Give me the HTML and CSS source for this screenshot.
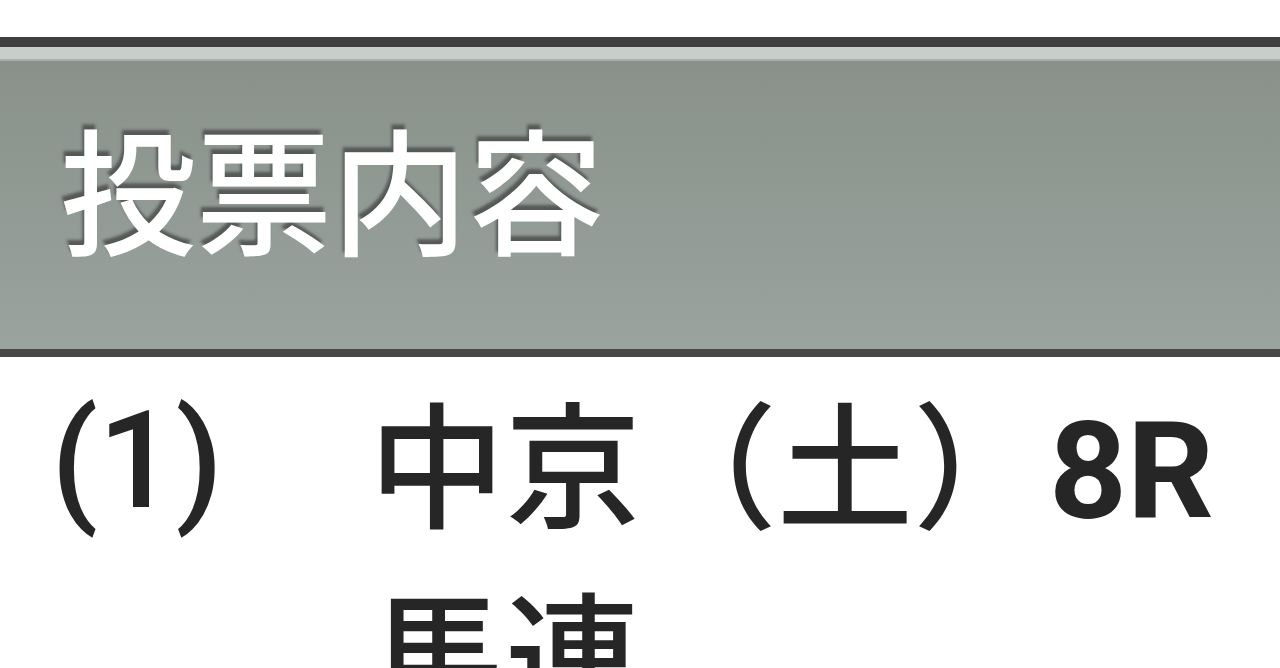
FILE: index.html
```html
<!DOCTYPE html>
<html lang="ja">
<head>
    <meta charset="UTF-8">
    <title>投票内容</title>
    <link rel="stylesheet" href="styles.css">
</head>
<body>

    <div class="head">
        <h2 class="head-title">投票内容</h2>
    </div>

    <!-- 投票 1件分 -->
    <div class="vote">
        <div class="vote-no">(1)</div>
        <div class="vote-body">中京（土）<b>8R</b> 馬連</div>
    </div>

</body>
</html>
```

FILE: styles.css
```css
body{
    margin: 0;
    background-color: #ffffff;
    font-family: Roboto, "Noto Sans CJK JP", sans-serif;
}

.head{
    margin-top: 37px;
    border-top: 10px solid #3e3f3e;
    border-bottom: 8px solid #474847;
    height: 302px;
    background: linear-gradient(#889089, #9ba39f);
    box-shadow: inset 0 12px 0 #c9cecb, inset 0 14px 0 #a9afab;
}

.head-title{
    margin: 0;
    padding: 84px 0 0 60px;
    font-size: 136px;
    font-weight: 500;
    line-height: 136px;
    color: #ffffff;
    text-shadow: -2px -5px 3px #555a57;
}

.vote{
    display: flex;
    align-items: flex-start;
    color: #262626;
    font-size: 136px;
    font-weight: 500;
    line-height: 190px;
    padding-top: 9px;
}

.vote-no{
    width: 318px;
    padding-left: 51px;
    flex-shrink: 0;
}

/* 番号より少し下げる */
.vote-body{
    flex: 1;
    padding-top: 11px;
}

.vote-body b{
    font-weight: bold;
}
```
